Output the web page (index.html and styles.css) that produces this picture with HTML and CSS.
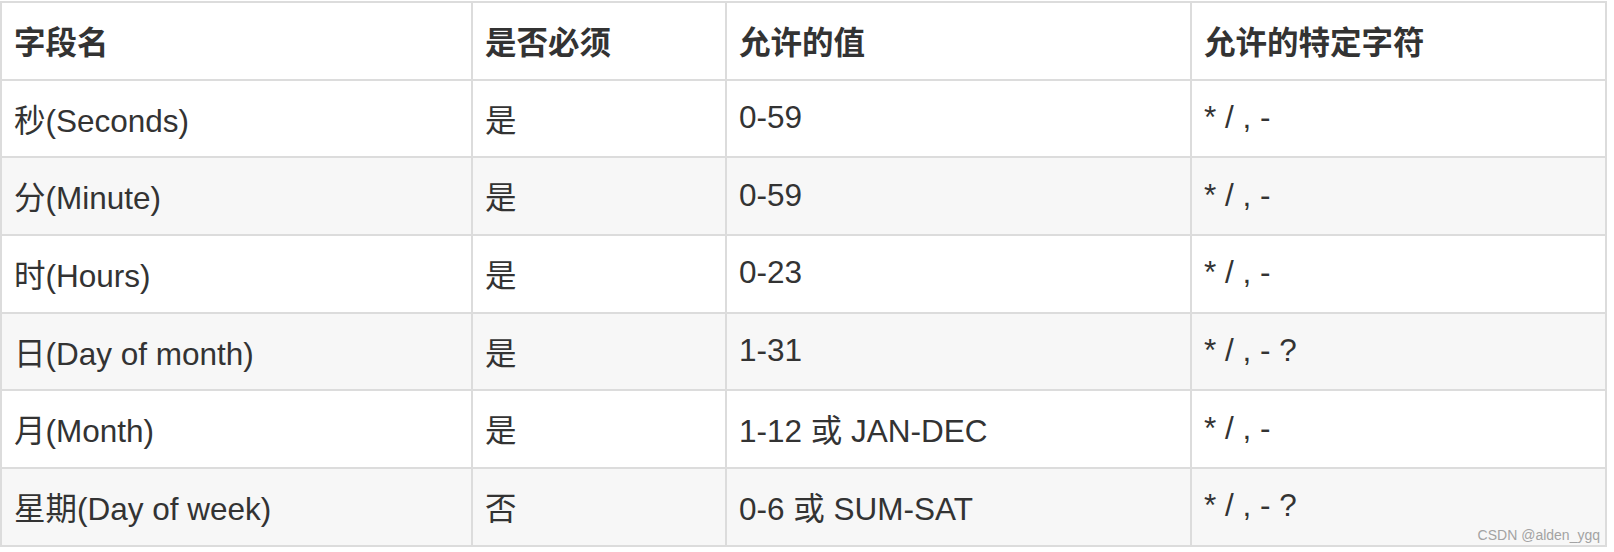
FILE: index.html
```
<!DOCTYPE html>
<html lang="zh-CN">
<head>
<meta charset="utf-8">
<title>Cron 字段</title>
<link rel="stylesheet" href="styles.css">
</head>
<body>
<div class="page">
  <table class="cron">
    <colgroup>
      <col class="c1"><col class="c2"><col class="c3"><col class="c4">
    </colgroup>
    <thead>
      <tr><th>字段名</th><th>是否必须</th><th>允许的值</th><th>允许的特定字符</th></tr>
    </thead>
    <tbody>
      <tr><td>秒(Seconds)</td><td>是</td><td>0-59</td><td>* / , -</td></tr>
      <tr><td>分(Minute)</td><td>是</td><td>0-59</td><td>* / , -</td></tr>
      <tr><td>时(Hours)</td><td>是</td><td>0-23</td><td>* / , -</td></tr>
      <tr><td>日(Day of month)</td><td>是</td><td>1-31</td><td>* / , - ?</td></tr>
      <tr><td>月(Month)</td><td>是</td><td>1-12 或 JAN-DEC</td><td>* / , -</td></tr>
      <tr><td>星期(Day of week)</td><td>否</td><td>0-6 或 SUM-SAT</td><td>* / , - ?</td></tr>
    </tbody>
  </table>
  <div class="watermark">CSDN @alden_ygq</div>
</div>
</body>
</html>
```

FILE: styles.css
```
html, body {
  margin: 0;
  padding: 0;
  background: #ffffff;
}
.page {
  position: relative;
  width: 1614px;
  height: 552px;
  padding-top: 1px;
  box-sizing: border-box;
}
.cron {
  border-collapse: collapse;
  table-layout: fixed;
  width: 1607px;
  font-family: "Liberation Sans", "Noto Sans CJK SC", sans-serif;
  font-size: 31.5px;
  color: #333333;
}
.c1 { width: 471px; }
.c2 { width: 254px; }
.c3 { width: 465px; }
.c4 { width: 415px; }
.cron th, .cron td {
  border: 2px solid #dcdcdc;
  height: 77.7px;
  box-sizing: border-box;
  padding: 0 12px 2px;
  text-align: left;
  vertical-align: middle;
  white-space: nowrap;
}
.cron th {
  font-weight: bold;
}
.cron tbody tr:nth-child(2n) {
  background: #f7f7f7;
}
.watermark {
  position: absolute;
  right: 14px;
  bottom: 9px;
  font-family: "Liberation Sans", sans-serif;
  font-size: 14px;
  color: #a3a3a3;
}
```
